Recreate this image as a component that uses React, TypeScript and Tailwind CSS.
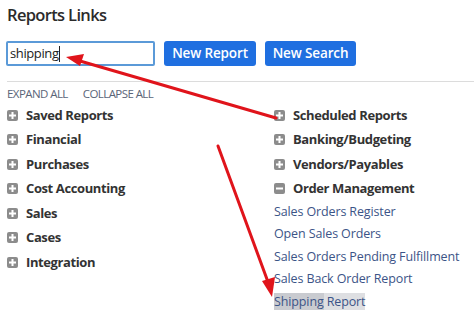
import React from "react";

const PlusIcon = ({ minus = false }: { minus?: boolean }) => (
  <svg width="11" height="11" viewBox="0 0 11 11" className="shrink-0">
    <rect x="0" y="0" width="11" height="11" rx="2" fill="#8c8c8c" />
    <rect x="2" y="4.5" width="7" height="2" fill="#fff" />
    {!minus && <rect x="4.5" y="2" width="2" height="7" fill="#fff" />}
  </svg>
);

const Cat = ({ label, minus = false }: { label: string; minus?: boolean }) => (
  <div className="flex items-center gap-[8px] h-[24.5px]">
    <PlusIcon minus={minus} />
    <span className="text-[13px] font-bold tracking-[-0.03em] text-[#333]">{label}</span>
  </div>
);

const Link = ({ label }: { label: string }) => (
  <div className="h-[22.5px] flex items-center">
    <span className="text-[12.5px] tracking-[-0.01em] text-[#3c5487]">{label}</span>
  </div>
);

export default function App() {
  return (
    <div
      className="relative w-[474px] h-[317px] bg-white overflow-hidden"
      style={{ fontFamily: '"Open Sans", sans-serif' }}
    >
      <div className="pl-[7px] pt-[3px]">
        <h1 className="text-[16.5px] font-semibold tracking-[-0.04em] text-[#2b2b2b] leading-[24px]">Reports Links</h1>
        <div className="flex items-center mt-[14px] h-[25px]">
          <div className="w-[149px] h-[25px] border-2 border-[#5b9ad8] rounded-[2px] flex items-center pl-[2px] -ml-[1px]">
            <span className="text-[13px] tracking-[-0.03em] text-[#222]">shipping</span>
            <span className="w-px h-[16px] bg-[#222]" />
          </div>
          <button className="ml-[9px] h-[25px] w-[92px] bg-[#1f6fe0] rounded-[3px] text-white text-[13.5px] tracking-[-0.01em] font-semibold">
            New Report
          </button>
          <button className="ml-[9px] h-[25px] w-[91px] bg-[#1f6fe0] rounded-[3px] text-white text-[13.5px] tracking-[-0.01em] font-semibold">
            New Search
          </button>
        </div>
      </div>
      <div className="ml-[7px] mt-[15px] border-t border-[#dcdcdc]" />
      <div className="pl-[7px] flex gap-[15px] mt-[4px] text-[11.5px] tracking-[-0.05em] text-[#5a6578] leading-[16px]">
        <span>EXPAND ALL</span>
        <span>COLLAPSE ALL</span>
      </div>
      <div className="grid grid-cols-[267px_1fr] pl-[7px] mt-[1px]">
        <div className="flex flex-col">
          <Cat label="Saved Reports" />
          <Cat label="Financial" />
          <Cat label="Purchases" />
          <Cat label="Cost Accounting" />
          <Cat label="Sales" />
          <Cat label="Cases" />
          <Cat label="Integration" />
        </div>
        <div className="flex flex-col">
          <Cat label="Scheduled Reports" />
          <Cat label="Banking/Budgeting" />
          <Cat label="Vendors/Payables" />
          <Cat label="Order Management" minus />
          <Link label="Sales Orders Register" />
          <Link label="Open Sales Orders" />
          <Link label="Sales Orders Pending Fulfillment" />
          <Link label="Sales Back Order Report" />
          <div className="h-[22.5px] flex items-center">
            <span className="text-[12.5px] tracking-[-0.01em] text-[#3c5487]">
              <span className="bg-[#c9cbd0]">Shipping</span>
              <span className="bg-[#dedfe2]"> Report</span>
            </span>
          </div>
        </div>
      </div>
      <svg className="absolute inset-0 pointer-events-none" width="474" height="317">
        <line x1="276" y1="118" x2="80" y2="61" stroke="#e0141b" strokeWidth="3" strokeLinecap="round" />
        <polygon points="66,57 84,54 80,66" fill="#e0141b" />
        <line x1="218" y1="146" x2="268" y2="282" stroke="#e0141b" strokeWidth="3" strokeLinecap="round" />
        <polygon points="272,297 262,281 275,277" fill="#e0141b" />
      </svg>
    </div>
  );
}
